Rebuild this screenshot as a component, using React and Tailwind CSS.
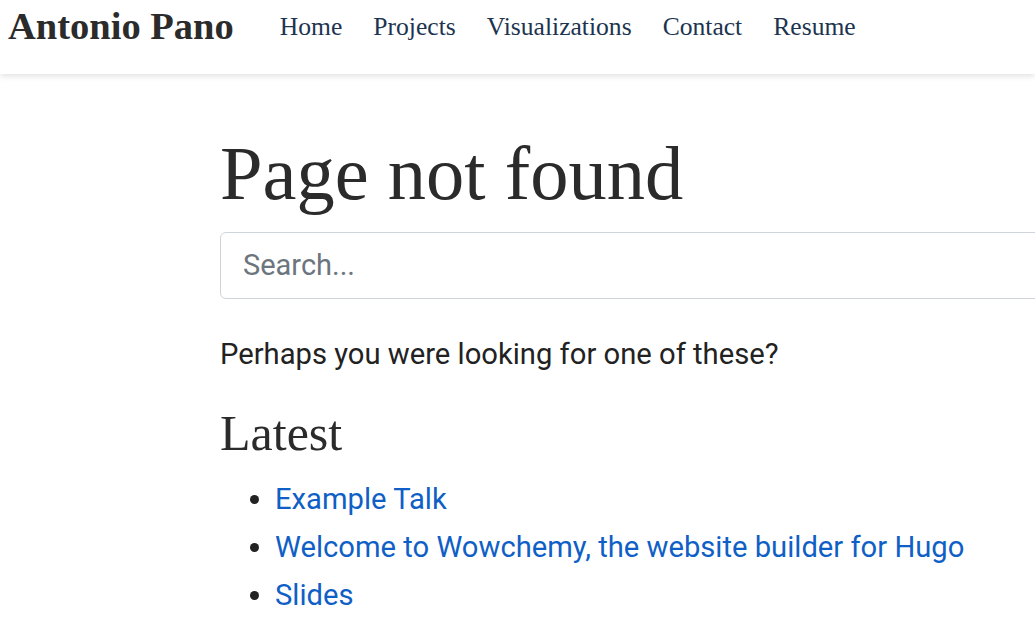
import React from 'react';

const navLinks = ['Home', 'Projects', 'Visualizations', 'Contact', 'Resume'];
const latest = ['Example Talk', 'Welcome to Wowchemy, the website builder for Hugo', 'Slides'];

function Navbar() {
  return (
    <nav className="relative z-10 h-[74px] bg-white shadow-[0_2px_6px_rgba(0,0,0,0.12)]">
      <div className="flex items-start pl-[8px] pt-[5px]">
        <a className="font-['Liberation_Serif',serif] text-[38.5px] font-bold leading-[42px] text-[#2b2b2b]">
          Antonio Pano
        </a>
        <ul className="ml-[46px] flex gap-[31px] pt-[8px]">
          {navLinks.map((link) => (
            <li key={link}>
              <a className="font-['Liberation_Serif',serif] text-[25.6px] leading-[28px] text-[#1d3450]">
                {link}
              </a>
            </li>
          ))}
        </ul>
      </div>
    </nav>
  );
}

export default function App() {
  return (
    <div className="min-h-screen overflow-hidden bg-white">
      <Navbar />
      <main className="pl-[220px]">
        <h1 className="mt-[62px] font-['Liberation_Serif',serif] text-[76.5px] leading-none text-[#2b2b2b]">
          Page not found
        </h1>
        <input
          type="search"
          placeholder="Search..."
          className="mt-[19px] block h-[67px] w-[900px] rounded-[6px] border border-[#ced4da] px-[22px] font-['Roboto',sans-serif] text-[29px] text-[#495057] placeholder:text-[#6c757d] focus:outline-none"
        />
        <p className="mt-[38px] font-['Roboto',sans-serif] text-[29.2px] leading-[35px] text-[#222]">
          Perhaps you were looking for one of these?
        </p>
        <h2 className="mt-[36px] font-['Liberation_Serif',serif] text-[50px] leading-none text-[#2b2b2b]">
          Latest
        </h2>
        <ul className="mt-[17px] list-disc pl-[55px] font-['Roboto',sans-serif] text-[29.2px] leading-[48px] text-[#222]">
          {latest.map((item) => (
            <li key={item}>
              <a className="text-[#0f5fc6]">{item}</a>
            </li>
          ))}
        </ul>
      </main>
    </div>
  );
}
